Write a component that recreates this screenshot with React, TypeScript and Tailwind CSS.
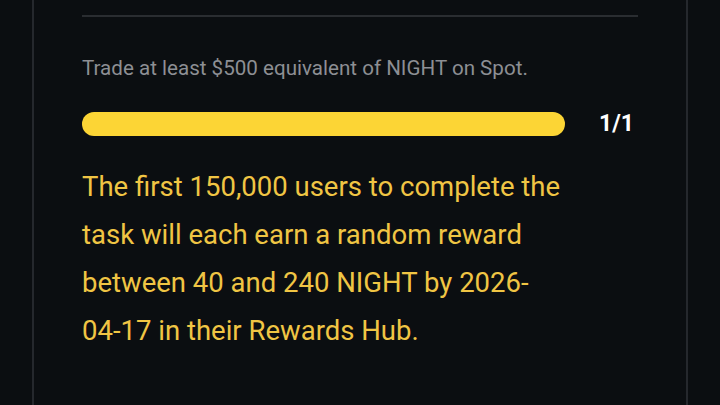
export default function App() {
  return (
    <div className="h-[405px] w-[720px] overflow-hidden bg-[#0b0e11]">
      <div className="mx-[32px] h-full border-x-2 border-[#25282d] px-[48px] font-['Roboto',sans-serif]">
        <div className="h-[15px]" />
        <div className="h-[2px] bg-[#2a2d31]" />
        <p className="mt-[37px] text-[20.6px] leading-[28px] text-[#8d8f94]">
          Trade at least $500 equivalent of NIGHT on Spot.
        </p>
        <div className="mt-[30px] flex items-center">
          <div className="h-[24px] flex-1 rounded-full bg-[#fcd535]" />
          <span className="ml-[34px] pr-[4px] text-[23px] font-bold leading-[24px] text-white">1/1</span>
        </div>
        <p className="mt-[27px] max-w-[495px] text-[27.5px] leading-[48px] text-[#f0c544]">
          The first 150,000 users to complete the task will each earn a random reward between 40 and 240 NIGHT by 2026-<span className="whitespace-nowrap">04-17</span> in their Rewards Hub.
        </p>
      </div>
    </div>
  );
}
